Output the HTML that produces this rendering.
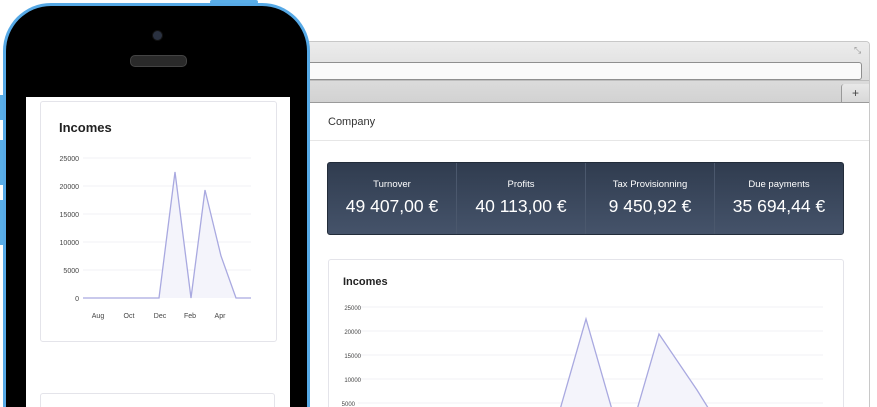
<!DOCTYPE html>
<html><head><style>
html,body{margin:0;width:877px;height:407px;overflow:hidden;background:#fff}
#w{position:relative;width:877px;height:407px;overflow:hidden;font-family:"Liberation Sans",sans-serif}
.abs{position:absolute}
</style></head><body><div id="w">
<!-- browser -->
<div class="abs" style="left:300px;top:41px;width:568px;height:365px;border:1px solid #c8c8c8;border-bottom:none;border-radius:4px 4px 0 0;background:#fff;overflow:hidden">
  <div class="abs" style="left:0;top:0;width:568px;height:60px;background:linear-gradient(#ececec,#d2d2d2);border-bottom:1px solid #9a9a9a"></div>
  <div class="abs" style="left:0;top:20px;width:559px;height:16px;background:#fafafa;border:1px solid #8f8f8f;border-radius:3px"></div>
  <div class="abs" style="left:0;top:38px;width:568px;height:1px;background:#bdbdbd"></div>
  <div class="abs" style="left:540px;top:42px;width:27px;height:18px;background:linear-gradient(#e8e8e8,#d8d8d8);border-left:1px solid #999;border-radius:3px 0 0 0;font-size:12px;text-align:center;line-height:18px;color:#444">+</div>
  <div class="abs" style="left:553px;top:3px;font-size:9px;color:#999">⤡</div>
  <div class="abs" style="left:27px;top:74px;font-size:11px;color:#333">Company</div>
  <div class="abs" style="left:0;top:98px;width:568px;height:1px;background:#e6e6e6"></div>
  <div class="abs" style="left:26px;top:120px;width:515px;height:71px;background:linear-gradient(#303c4f,#45536a);border:1px solid #222c3a;border-radius:3px;display:flex;color:#fff;text-align:center">
    <div style="flex:1;border-right:1px solid #4b586d"><div style="font-size:9.5px;margin-top:16px">Turnover</div><div style="font-size:17.5px;margin-top:6px">49 407,00 €</div></div>
    <div style="flex:1;border-right:1px solid #4b586d"><div style="font-size:9.5px;margin-top:16px">Profits</div><div style="font-size:17.5px;margin-top:6px">40 113,00 €</div></div>
    <div style="flex:1;border-right:1px solid #4b586d"><div style="font-size:9.5px;margin-top:16px">Tax Provisionning</div><div style="font-size:17.5px;margin-top:6px">9 450,92 €</div></div>
    <div style="flex:1"><div style="font-size:9.5px;margin-top:16px">Due payments</div><div style="font-size:17.5px;margin-top:6px">35 694,44 €</div></div>
  </div>
  <div class="abs" style="left:27px;top:217px;width:514px;height:148px;border:1px solid #e4e4ea;border-bottom:none;border-radius:3px 3px 0 0"></div>
</div>
<svg class="abs" style="left:0;top:0" width="877" height="407">
  <text x="343" y="285" font-size="11" font-weight="bold" fill="#222" font-family="Liberation Sans">Incomes</text>
  <g stroke="#f0f0f4"><line x1="358" y1="307" x2="823" y2="307"/><line x1="358" y1="331" x2="823" y2="331"/><line x1="358" y1="355" x2="823" y2="355"/><line x1="358" y1="379" x2="823" y2="379"/><line x1="358" y1="403" x2="823" y2="403"/></g>
  <g font-size="6" fill="#444" text-anchor="end" font-family="Liberation Sans"><text x="361" y="310">25000</text><text x="361" y="334">20000</text><text x="361" y="358">15000</text><text x="361" y="382">10000</text><text x="355" y="406">5000</text></g>
  <path d="M555,427 L586,319 L617,427 L632,427 L659,334 L697,390 L720,427 Z" fill="#f4f4fb"/>
  <path d="M555,427 L586,319 L617,427 L632,427 L659,334 L697,390 L720,427" fill="none" stroke="#a9a9e0" stroke-width="1.3"/>
</svg>
<!-- phone -->
<div class="abs" style="left:210px;top:0;width:48px;height:4px;background:#5aaee8;border-radius:2px"></div>
<div class="abs" style="left:0;top:95px;width:4px;height:25px;background:#5aaee8"></div>
<div class="abs" style="left:0;top:140px;width:4px;height:45px;background:#5aaee8"></div>
<div class="abs" style="left:0;top:200px;width:4px;height:45px;background:#5aaee8"></div>
<div class="abs" style="left:3px;top:3px;width:301px;height:401px;border:3px solid #56a9e6;border-bottom:none;border-radius:48px 48px 0 0;background:#000"></div>
<div class="abs" style="left:153px;top:31px;width:9px;height:9px;border-radius:50%;background:#2a3140;box-shadow:0 0 0 1px #111"></div>
<div class="abs" style="left:130px;top:55px;width:55px;height:10px;border-radius:5px;background:#2a2a2a;border:1px solid #444"></div>
<div class="abs" style="left:26px;top:97px;width:264px;height:310px;background:#fff"></div>
<div class="abs" style="left:40px;top:101px;width:235px;height:239px;border:1px solid #e4e4ea;border-radius:3px"></div>
<div class="abs" style="left:40px;top:393px;width:235px;height:14px;border:1px solid #e4e4ea;border-bottom:none;border-radius:3px 3px 0 0;box-sizing:border-box"></div>
<svg class="abs" style="left:0;top:0" width="300" height="407">
  <text x="59" y="132" font-size="13" font-weight="bold" fill="#222" font-family="Liberation Sans">Incomes</text>
  <g stroke="#f0f0f4"><line x1="83" y1="158" x2="251" y2="158"/><line x1="83" y1="186" x2="251" y2="186"/><line x1="83" y1="214" x2="251" y2="214"/><line x1="83" y1="242" x2="251" y2="242"/><line x1="83" y1="270" x2="251" y2="270"/></g>
  <g font-size="7" fill="#444" text-anchor="end" font-family="Liberation Sans"><text x="79" y="161">25000</text><text x="79" y="189">20000</text><text x="79" y="217">15000</text><text x="79" y="245">10000</text><text x="79" y="273">5000</text><text x="79" y="301">0</text></g>
  <g font-size="7" fill="#444" text-anchor="middle" font-family="Liberation Sans"><text x="98" y="318">Aug</text><text x="129" y="318">Oct</text><text x="160" y="318">Dec</text><text x="190" y="318">Feb</text><text x="220" y="318">Apr</text></g>
  <path d="M159,298 L175,172 L191,298 L205,190 L221,256 L236,298 Z" fill="#f4f4fb"/>
  <path d="M83,298 L159,298 L175,172 L191,298 L205,190 L221,256 L236,298 L251,298" fill="none" stroke="#a9a9e0" stroke-width="1.3"/>
</svg>
</div></body></html>
